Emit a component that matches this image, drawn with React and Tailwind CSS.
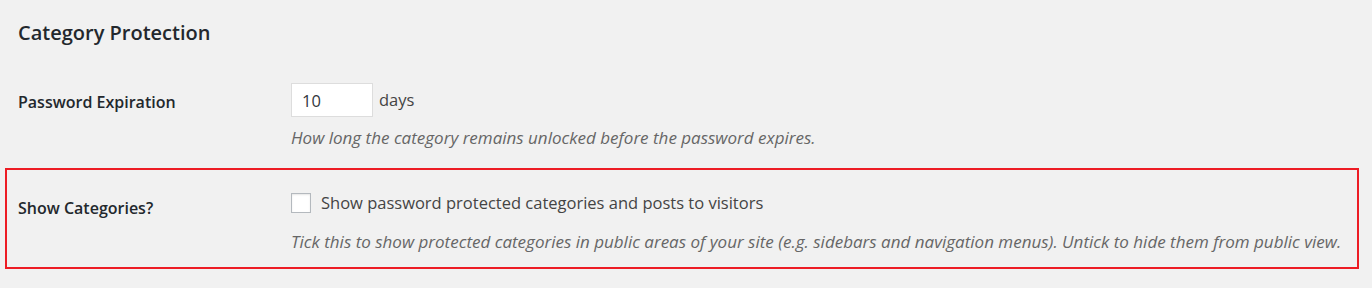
import React, { useState } from 'react';

const font = { fontFamily: '"Open Sans", "Noto Sans", sans-serif' };

const App = () => {
  const [days, setDays] = useState('10');
  const [show, setShow] = useState(false);

  return (
    <div className="w-[1372px] h-[288px] bg-[#f1f1f1] text-[#23282d] overflow-hidden" style={font}>
      <h2 className="pl-[18px] pt-[19px] text-[20px] font-semibold leading-[28px]">Category Protection</h2>

      <div className="flex pl-[18px] mt-[36px]">
        <div className="w-[273px] pt-[8px] text-[16px] font-semibold leading-[22px]">Password Expiration</div>
        <div>
          <div className="flex items-center gap-[6px]">
            <input
              value={days}
              onChange={(e) => setDays(e.target.value)}
              className="w-[82px] h-[34px] px-[10px] bg-white border border-[#dddddd] text-[16.5px] text-[#32373c] outline-none"
              style={font}
            />
            <span className="text-[16.5px] text-[#444]">days</span>
          </div>
          <p className="mt-[10px] text-[17px] italic text-[#666] leading-[22px]">
            How long the category remains unlocked before the password expires.
          </p>
        </div>
      </div>

      <div className="ml-[5px] mt-[19px] w-[1354px] h-[101px] border-2 border-[#ed1c24] flex pl-[11px]">
        <div className="w-[273px] pt-[27px] text-[16px] font-semibold leading-[22px]">Show Categories?</div>
        <div className="pt-[23px]">
          <label className="flex items-center gap-[10px] cursor-pointer">
            <input
              type="checkbox"
              checked={show}
              onChange={(e) => setShow(e.target.checked)}
              className="appearance-none w-[20px] h-[20px] bg-white border border-[#b4b9be] shadow-[inset_0_1px_2px_rgba(0,0,0,0.1)] m-0"
            />
            <span className="text-[16.5px] text-[#444] leading-[20px]">Show password protected categories and posts to visitors</span>
          </label>
          <p className="mt-[18px] text-[17px] italic text-[#666] leading-[22px] whitespace-nowrap">
            Tick this to show protected categories in public areas of your site (e.g. sidebars and navigation menus). Untick to hide them from public view.
          </p>
        </div>
      </div>
    </div>
  );
};

export default App;
